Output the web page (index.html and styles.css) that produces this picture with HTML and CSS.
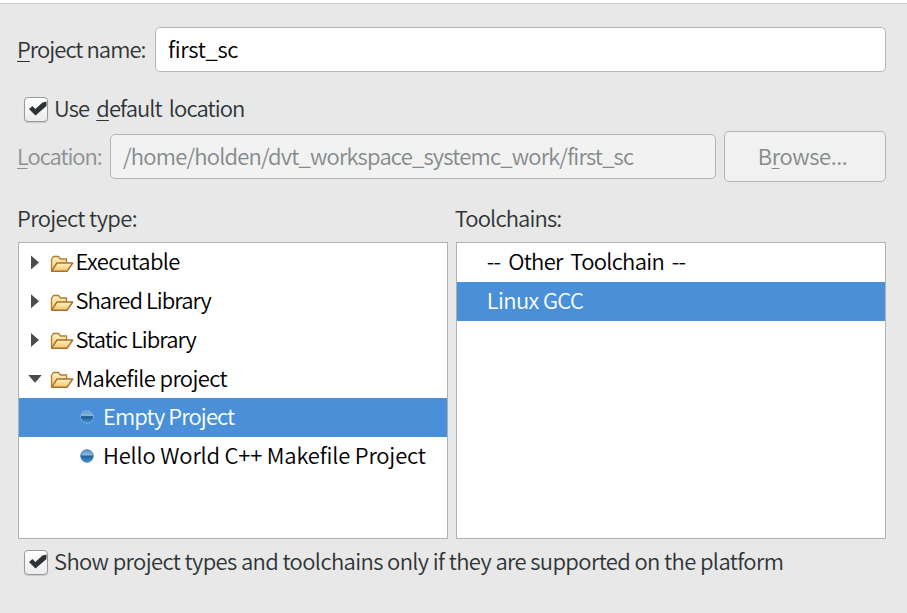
FILE: index.html
```html
<!DOCTYPE html>
<html lang="en">
  <head>
    <meta charset="UTF-8" />
    <meta name="viewport" content="width=device-width, initial-scale=1.0" />
    <title>New Project</title>
    <link rel="stylesheet" href="styles.css">
  </head>
  <body>
    <svg width="0" height="0" class="defs">
      <defs>
        <linearGradient id="folderFill" x1="0" y1="0" x2="0" y2="1">
          <stop offset="0" stop-color="#fff3c4" />
          <stop offset="1" stop-color="#f2c468" />
        </linearGradient>
        <linearGradient id="dotFill" x1="0" y1="0" x2="0" y2="1">
          <stop offset="0" stop-color="#5f9cca" />
          <stop offset="0.42" stop-color="#8ab8da" />
          <stop offset="0.5" stop-color="#205f9c" />
          <stop offset="1" stop-color="#4696d2" />
        </linearGradient>
        <symbol id="folder" viewBox="0 0 24 18">
          <path d="M1.5 15.5V4.5L3.5 1.5H8.5L10.5 4H16.5V8" fill="url(#folderFill)" stroke="#b07c35" stroke-width="1.3" />
          <path d="M1.5 16.3L7 8H22.7L17 16.3Z" fill="url(#folderFill)" stroke="#a8702c" stroke-width="1.4" stroke-linejoin="round" />
        </symbol>
        <symbol id="check" viewBox="0 0 24 25">
          <path d="M5 12L8.5 9L11.3 12L18.5 5.5L22.5 4.5V9L11.5 18.5Z" fill="#2e3436" />
        </symbol>
      </defs>
    </svg>

    <div class="wizard">
      <div class="row name-row">
        <label class="name-label" for="projectName"><u>P</u>roject name:</label>
        <input type="text" id="projectName" class="field" value="first_sc" spellcheck="false" />
      </div>

      <div class="check-row">
        <span class="checkbox"><svg><use href="#check" /></svg></span>
        <span class="text default-label">Use <u>d</u>efault location</span>
      </div>

      <div class="row location-row">
        <label class="location-label" for="location"><u>L</u>ocation:</label>
        <input type="text" id="location" class="field" value="/home/holden/dvt_workspace_systemc_work/first_sc" disabled />
        <button class="browse" disabled>B<u>r</u>owse...</button>
      </div>

      <div class="panes">
        <div class="pane">
          <div class="pane-title">Project type:</div>
          <div class="list">
            <div class="item">
              <span class="arrow"></span>
              <svg class="folder"><use href="#folder" /></svg>
              <span class="text">Executable</span>
            </div>
            <div class="item">
              <span class="arrow"></span>
              <svg class="folder"><use href="#folder" /></svg>
              <span class="text tighter">Shared Library</span>
            </div>
            <div class="item">
              <span class="arrow"></span>
              <svg class="folder"><use href="#folder" /></svg>
              <span class="text tighter">Static Library</span>
            </div>
            <div class="item">
              <span class="arrow open"></span>
              <svg class="folder"><use href="#folder" /></svg>
              <span class="text">Makefile project</span>
            </div>
            <div class="item child selected">
              <svg class="dot" viewBox="0 0 14 14">
                <circle cx="7" cy="7" r="6.2" fill="url(#dotFill)" stroke="#a9cdec" stroke-width="1" stroke-dasharray="1.5 1.5" />
                <path d="M1 7H13" stroke="#1d5890" stroke-width="1.5" />
              </svg>
              <span class="text tight">Empty Project</span>
            </div>
            <div class="item child">
              <svg class="dot" viewBox="0 0 14 14">
                <circle cx="7" cy="7" r="6.2" fill="url(#dotFill)" stroke="#3878ae" stroke-width="1" />
              </svg>
              <span class="text loose">Hello World C++ Makefile Project</span>
            </div>
          </div>
        </div>

        <div class="pane">
          <div class="pane-title tight">Toolchains:</div>
          <div class="list">
            <div class="item tool"><span class="text other">-- Other Toolchain --</span></div>
            <div class="item tool selected"><span class="text">Linux GCC</span></div>
          </div>
        </div>
      </div>

      <div class="check-row show-row">
        <span class="checkbox"><svg><use href="#check" /></svg></span>
        <span class="text">Show project types and toolchains only if they are supported on the platform</span>
      </div>
    </div>
  </body>
</html>
```

FILE: styles.css
```css
* {
  box-sizing: border-box;
}

body {
  margin: 0;
  height: 613px;
  overflow: hidden;
  background-color: #e8e8e8;
  border-top: 3px solid #fff;
  font-family: "Noto Sans CJK SC", "Noto Sans", sans-serif;
  font-size: 22px;
  font-weight: 350;
  line-height: 30px;
  letter-spacing: -0.62px;
  color: #2e3436;
  white-space: nowrap;
}

.defs {
  display: block;
}

.wizard {
  height: 610px;
  padding: 23px 21.5px 0 18px;
  border-top: 1px solid #ccc;
}

u {
  text-underline-offset: 3px;
  text-decoration-thickness: 1px;
  text-decoration-skip-ink: none;
}

.tight {
  letter-spacing: -0.87px;
}

.tighter {
  letter-spacing: -0.95px;
}

.loose {
  letter-spacing: -0.18px;
}

.other {
  letter-spacing: -0.7px;
  word-spacing: 3.5px;
}

.row {
  display: flex;
  align-items: center;
}

.row label {
  margin: -4px 1px 0 -1px;
}

.name-row {
  height: 45px;
}

.name-label {
  width: 137px;
  letter-spacing: -0.95px;
}

.field {
  flex: 1;
  min-width: 0;
  height: 45px;
  padding: 0 12px 4px;
  border: 1.5px solid #b4b4b4;
  border-radius: 5px;
  background-color: #fff;
  font: inherit;
  letter-spacing: -0.3px;
  color: #000;
}

.check-row {
  display: flex;
  align-items: center;
  height: 30px;
  margin-top: 22px;
  padding-left: 6px;
  gap: 6px;
}

.text {
  margin-top: -4px;
}

.default-label {
  letter-spacing: -0.9px;
  word-spacing: 3px;
}

.checkbox {
  width: 24px;
  height: 25px;
  border: 1.5px solid #999;
  border-radius: 4px;
  background: linear-gradient(#fff, #ececec);
  box-shadow: 0 1px 1px #c8c8c8;
}

.checkbox svg {
  display: block;
  width: 24px;
  height: 25px;
  margin: -1px;
}

.location-row {
  height: 51px;
  margin-top: 7px;
  color: #8d9091;
}

.location-label {
  width: 92px;
  letter-spacing: -1.05px;
}

.location-row .field {
  background-color: #f2f2f2;
  color: #85898a;
  letter-spacing: -0.8px;
}

.browse {
  width: 162px;
  height: 51px;
  margin-left: 8px;
  padding: 0 4px 4px 0;
  border: 1.5px solid #b4b4b4;
  border-radius: 5px;
  background-color: #f1f1f1;
  font: inherit;
  letter-spacing: -0.4px;
  color: #85898a;
}

.panes {
  display: flex;
  gap: 8px;
  margin-top: 20px;
}

.pane {
  flex: 1;
}

.pane-title {
  height: 40px;
  margin-left: -1px;
}

.list {
  height: 297px;
  border: 1px solid #b0b0ae;
  background-color: #fff;
  color: #000;
}

.item {
  display: flex;
  align-items: center;
  height: 38.75px;
  padding-left: 11px;
}

.item.child {
  padding-left: 61px;
}

.item.tool {
  padding-left: 30px;
}

.selected {
  background-color: #4a90d9;
  color: #fff;
}

.arrow {
  width: 20px;
  height: 14px;
}

.arrow::before {
  content: "";
  display: block;
  width: 8px;
  height: 14px;
  margin-left: 1px;
  background-color: #4c4c4c;
  clip-path: polygon(0 0, 100% 50%, 0 100%);
}

.arrow.open::before {
  width: 14px;
  height: 8px;
  margin: 3px 0 0 -2px;
  clip-path: polygon(0 0, 100% 0, 50% 100%);
}

.folder {
  width: 24px;
  height: 18px;
  margin: 3px 2px 0 -0.5px;
}

.dot {
  width: 14px;
  height: 14px;
  margin-right: 9px;
}

.show-row {
  margin-top: 8px;
}
```
